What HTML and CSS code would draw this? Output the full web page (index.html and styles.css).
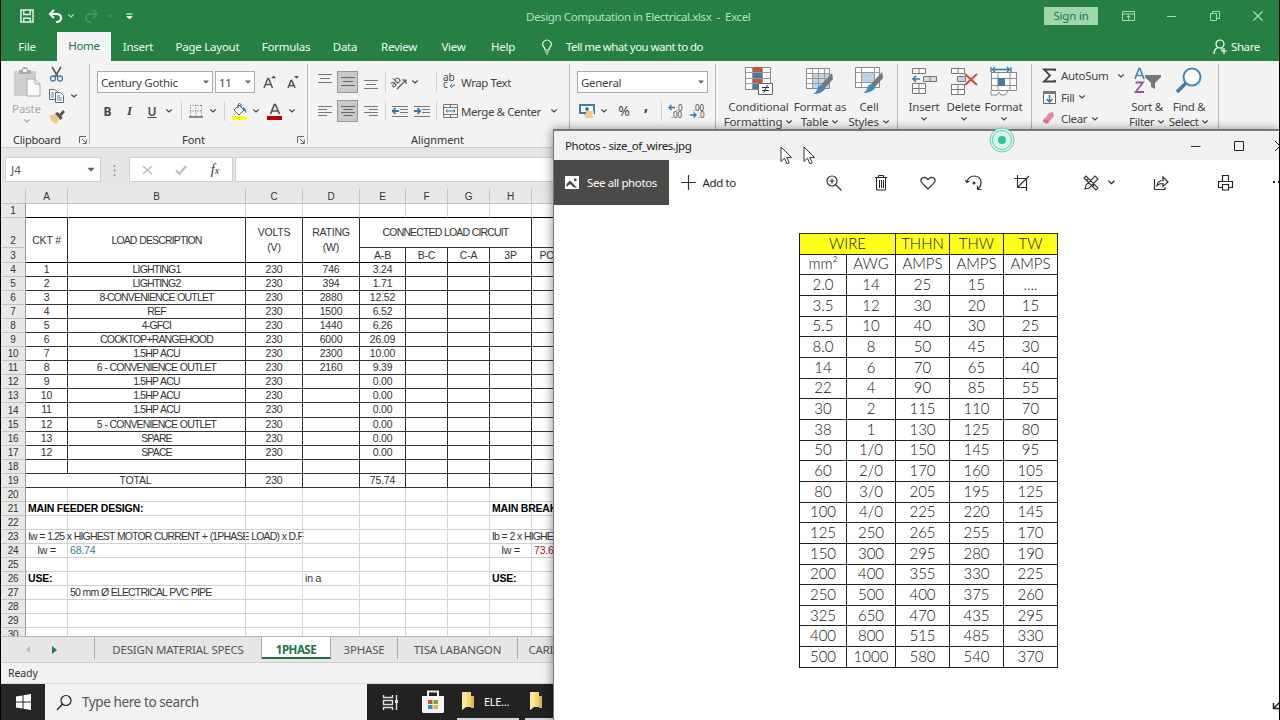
FILE: index.html
```html
<!DOCTYPE html>
<html lang="en">
<head>
<meta charset="utf-8">
<title>Design Computation in Electrical.xlsx - Excel</title>
<link rel="stylesheet" href="styles.css">
</head>
<body>
<svg class="defs" width="0" height="0">
  <symbol id="chev" viewBox="0 0 8 6"><path d="M1.300 1.500 4 4 6.700 1.500" fill="none" stroke="currentColor" stroke-width="1.1"/></symbol>
  <symbol id="tri" viewBox="0 0 6 4"><path d="M0 .5h6L3 3.8z" fill="#666"/></symbol>
  <symbol id="launch" viewBox="0 0 8 8"><path d="M.5 7V.5H7M3 3l4 4M7.3 3.500v4H3.500" fill="none" stroke="#666"/></symbol>
  <symbol id="folder" viewBox="0 0 14 20"><path d="M1 1h9v4h2v11H5l-4 3z" fill="#f3d675"/><path d="M1 1h5v14l-5 4z" fill="#fbe9a2"/><path d="M10 5h3v12h-3z" fill="#dcb650"/></symbol>
  <symbol id="pointer" viewBox="0 0 13 19"><path d="M1 1v14.500l3.500-3.300 2.400 5.600 2.300-1-2.400-5.400h4.700z" fill="#fff" stroke="#333"/></symbol>
  <symbol id="brush" viewBox="0 0 20 22"><path d="M19 0 20 6 12 15 8 12z" fill="#777"/><path d="M8 12q4 0 4 4-3 5-12 5 4-2 4-5 1-3 4-4z" fill="#4389b8"/></symbol>
</svg>
<div class="screen">
  <div class="excel">
    <header class="titlebar">
      <div class="qat">
        <svg width="14" height="14" viewBox="0 0 15 15"><path d="M1 1h13v13H1zM4 1v5h7V1M4 14v-4h7v4" fill="none" stroke="#e4f5e8" stroke-width="1.6"/></svg>
        <svg width="15" height="14" viewBox="0 0 15 14"><path d="M6 1 2 5l4 4M2 5h6q5 0 5 4t-5 4" fill="none" stroke="#fff" stroke-width="2"/></svg>
        <svg class="c light" width="8" height="6"><use href="#chev"/></svg>
        <svg width="15" height="14" viewBox="0 0 15 14"><path d="M9 1l4 4-4 4M13 5H7Q2 5 2 9t5 4" fill="none" stroke="#44935c" stroke-width="2"/></svg>
        <svg class="c dim" width="8" height="6"><use href="#chev"/></svg>
        <svg class="c light" width="7" height="7" viewBox="0 0 7 7"><path d="M.5 1h6M1 3.500h5L3.500 6z" stroke="#fff" fill="#fff"/></svg>
      </div>
      <div class="doc">Design Computation in Electrical.xlsx&nbsp; -&nbsp; Excel</div>
      <div class="signin">Sign in</div>
      <div class="winbtns">
        <svg width="13" height="11" viewBox="0 0 13 11"><path d="M.5.5h12v9H.5zM.5 3h12M6.500 9V4.500M4.500 6.500l2-2 2 2" fill="none" stroke="#a6dcb4"/></svg>
        <svg width="10" height="10"><path d="M0 5.500h9" stroke="#a6dcb4"/></svg>
        <svg width="10" height="10"><path d="M.5 2.500h6v7h-6zM2.500 2.500v-2h7v7h-3" fill="none" stroke="#a6dcb4"/></svg>
        <svg width="10" height="10"><path d="M.5.5l9 9M9.500.5l-9 9" stroke="#a6dcb4" stroke-width="1.200"/></svg>
      </div>
    </header>
    <nav class="tabs">
      <span class="file">File</span><span class="home">Home</span><span>Insert</span><span>Page Layout</span><span>Formulas</span><span>Data</span><span>Review</span><span>View</span><span>Help</span>
      <svg width="12" height="16" viewBox="0 0 12 16"><path d="M4 11Q4 9 2.500 7.500 1 5.500 2 3.500 3.500 1 6 1t4 2.500q1 2-.5 4Q8 9 8 11zM4 13h4M5 15h2" fill="none" stroke="#e8f6eb" stroke-width="1.200"/></svg>
      <span class="tell">Tell me what you want to do</span>
      <svg class="share-ico" width="15" height="16" viewBox="0 0 15 16"><circle cx="7" cy="5" r="4" fill="none" stroke="#fff" stroke-width="1.200"/><path d="M1 15q0-5 4-6.500M8 9.500l2 1M11 9v6M8 12h6" fill="none" stroke="#fff" stroke-width="1.200"/></svg>
      <span class="share">Share</span>
    </nav>

    <section class="ribbon">
      <div class="group clipboard">
        <div class="clip-body">
          <div class="big paste">
            <svg width="28" height="31" viewBox="0 0 28 31"><path d="M1 4h22v25H1z" fill="#cfcfcf"/><path d="M6 3h3q0-3 3-3t3 3h3v4H6z" fill="#aaa"/><path d="M10 2h4v3h-4z" fill="#eee"/><path d="M14 12h8l5 5v12H14z" fill="#fafafa" stroke="#aaa"/><path d="M22 12v5h5" fill="none" stroke="#aaa"/></svg>
            <span>Paste</span><svg width="8" height="6"><use href="#chev"/></svg>
          </div>
          <div class="clip-col">
            <svg width="15" height="15" viewBox="0 0 15 15"><path d="M3 0l6 10M12 0 6 10" stroke="#555" stroke-width="1.600"/><circle cx="4" cy="11.500" r="2.500" fill="none" stroke="#3f7fae" stroke-width="1.300"/><circle cx="11" cy="11.500" r="2.500" fill="none" stroke="#3f7fae" stroke-width="1.300"/></svg>
            <div class="with-chev"><svg width="15" height="14" viewBox="0 0 15 14"><path d="M.5.5h5l3 2v8h-8z" fill="#fff" stroke="#666"/><path d="M6.500 3.500h5l3 3v7h-8z" fill="#fff" stroke="#666"/><path d="M2 4h3M2 6h3M2 8h3M8 7h3M8 9h5M8 11h5" stroke="#4389b8"/></svg><svg width="8" height="6"><use href="#chev"/></svg></div>
            <svg width="16" height="14" viewBox="0 0 16 14"><path d="M0 6l6-2 5 5-4 5-2-1-1-2-1 1z" fill="#efc98a"/><path d="M6 3.500 8.500 2l2 2L14 0l2 2-3.500 4 1 2-2 2z" fill="#555"/></svg>
          </div>
        </div>
        <div class="label"><span>Clipboard</span><svg width="8" height="8"><use href="#launch"/></svg></div>
      </div>
      <div class="group font">
        <div class="row r1">
          <div class="combo face"><span>Century Gothic</span><svg width="6" height="4"><use href="#tri"/></svg></div>
          <div class="combo size"><span>11</span><svg width="6" height="4"><use href="#tri"/></svg></div>
          <svg class="grow" width="14" height="14" viewBox="0 0 14 14"><path d="M1 13 4.800 3.500h.8L9.500 13M2.500 9.500h5.500" fill="none" stroke="#555" stroke-width="1.500"/><path d="M8 3.200h5L10.500.5z" fill="#555"/></svg>
          <svg class="shrink" width="13" height="14" viewBox="0 0 13 14"><path d="M1 13 4 5.500h.8L8 13M2 10.500h5" fill="none" stroke="#555" stroke-width="1.500"/><path d="M7 1h5L9.500 3.700z" fill="#555"/></svg>
        </div>
        <div class="row r2">
          <b>B</b><b class="it">I</b><b class="un">U</b><svg width="8" height="6"><use href="#chev"/></svg><i class="sep"></i>
          <svg width="14" height="14"><path d="M1 1.500h12M1 7h12M1.500 1v11M7 1v11M12.500 1v11" stroke="#777" stroke-dasharray="1 1.500"/><path d="M0 13h14" stroke="#555" stroke-width="1.300"/></svg>
          <svg width="8" height="6"><use href="#chev"/></svg><i class="sep"></i>
          <svg width="16" height="17" viewBox="0 0 16 17"><path d="M2 7l5-5 5 5-5 5z" fill="#fff" stroke="#555"/><path d="M6 5V1.500q1.500-2 3 0V4" fill="none" stroke="#555"/><path d="M11 4q4 2 3 6-2-3-4-4z" fill="#3f7fae"/><path d="M0 13h15v4H0z" fill="#fbfb26"/></svg>
          <svg width="8" height="6"><use href="#chev"/></svg>
          <svg width="16" height="17" viewBox="0 0 16 17"><path d="M3.500 11 7.300 1.500h1L12.500 11M5 8h6" fill="none" stroke="#555" stroke-width="1.700"/><path d="M0 13h15v4H0z" fill="#c00000"/></svg>
          <svg width="8" height="6"><use href="#chev"/></svg>
        </div>
        <div class="label"><span>Font</span><svg width="8" height="8"><use href="#launch"/></svg></div>
      </div>
      <div class="group align">
        <div class="row a1">
          <svg width="14" height="16"><path d="M0 .5h14M2 4.500h10M0 8.500h14" stroke="#777"/></svg>
          <i class="on"><svg width="14" height="12"><path d="M0 1.500h14M2 5.500h10M0 9.500h14" stroke="#666"/></svg></i>
          <svg width="14" height="16"><path d="M0 6.500h14M2 10.500h10M0 14.500h14" stroke="#777"/></svg>
          <i class="sep"></i>
          <svg width="16" height="15" viewBox="0 0 16 15"><g transform="rotate(-45 5 7)"><text x="-2" y="9" font-family="Noto Sans" font-size="10" fill="#444">ab</text></g><path d="M5 14 14 5M14 9V5h-4" fill="none" stroke="#555" stroke-width="1.200"/></svg>
          <svg class="l" width="8" height="6"><use href="#chev"/></svg>
          <i class="sep"></i>
          <svg width="14" height="16" viewBox="0 0 14 16"><text x="0" y="7" font-family="Noto Sans" font-size="10" fill="#444">ab</text><text x="0" y="14" font-family="Noto Sans" font-size="10" fill="#444">c</text><path d="M7 12h4v-2M9 10l-2 2 2 2" fill="none" stroke="#3f7fae"/></svg>
          <span>Wrap Text</span>
        </div>
        <div class="row a1">
          <svg width="14" height="12"><path d="M0 1.500h14M0 4.500h9M0 7.500h14M0 10.500h9" stroke="#777"/></svg>
          <i class="on"><svg width="14" height="12"><path d="M0 1.500h14M2.500 4.500h9M0 7.500h14M2.500 10.500h9" stroke="#666"/></svg></i>
          <svg width="14" height="12"><path d="M0 1.500h14M5 4.500h9M0 7.500h14M5 10.500h9" stroke="#777"/></svg>
          <i class="sep"></i>
          <svg width="16" height="13"><path d="M0 1.500h16M8 4.500h8M8 7.500h8M0 11.500h16" stroke="#777"/><path d="M0 6h7M3.500 3 .8 6l2.700 3" fill="none" stroke="#2f79ad" stroke-width="1.800"/></svg>
          <svg width="16" height="13"><path d="M0 1.500h16M8 4.500h8M8 7.500h8M0 11.500h16" stroke="#777"/><path d="M0 6h6M3.500 3 6.200 6 3.500 9" fill="none" stroke="#2f79ad" stroke-width="1.800"/></svg>
          <i class="sep"></i>
          <svg width="15" height="14"><path d="M.5.5h14v13H.5zM.5 3.500h14M.5 10.500h14M7.500.5v3M7.500 10.500v3" fill="none" stroke="#777"/><path d="M3 7h9M4.500 5.500 3 7l1.500 1.500M10.500 5.500 12 7l-1.500 1.500" fill="none" stroke="#2f79ad"/></svg>
          <span>Merge &amp; Center</span><svg width="8" height="6"><use href="#chev"/></svg>
        </div>
        <div class="label"><span>Alignment</span></div>
      </div>
      <div class="group number">
        <div class="row"><div class="combo gen"><span>General</span><svg width="6" height="4"><use href="#tri"/></svg></div></div>
        <div class="row n2">
          <svg width="16" height="15"><path d="M1 1h14v8H1z" fill="#fff" stroke="#3f7f9e" stroke-width="2"/><circle cx="8" cy="5" r="2" fill="#3f7f9e"/><path d="M7 7h8v3H7zM5 10h8v2H5zM6 12h8v2H6z" fill="#f2cf85"/></svg>
          <svg width="8" height="6"><use href="#chev"/></svg>
          <span class="pct">%</span><span class="comma">,</span><i class="sep"></i>
          <svg width="15" height="15" viewBox="0 0 15 15"><text x="8" y="6.500" font-family="Noto Sans" font-size="8" fill="#444">.0</text><text x="3" y="14" font-family="Noto Sans" font-size="8" fill="#444">.00</text><path d="M1 3.500h6M3.500 1 1 3.500 3.500 6" fill="none" stroke="#2f79ad" stroke-width="1.300"/></svg>
          <svg width="15" height="15" viewBox="0 0 15 15"><text x="3" y="6.500" font-family="Noto Sans" font-size="8" fill="#444">.00</text><text x="8" y="14" font-family="Noto Sans" font-size="8" fill="#444">.0</text><path d="M0 11h6M3.500 8.500 6 11 3.500 13.500" fill="none" stroke="#2f79ad" stroke-width="1.300"/></svg>
        </div>
      </div>
      <div class="group styles">
        <div class="big"><svg width="28" height="30"><path d="M.5 1.500h25v22H.5z" fill="#fff" stroke="#888"/><path d="M8 1h9v5H8zM8 12h9v5H8z" fill="#c5573d"/><path d="M8 7h10v5H8z" fill="#447ba6"/><path d="M8 18h5v5H8z" fill="#447ba6"/><path d="M.5 6.500h25M.5 12.500h25M.5 17.500h25M7.500 1v22M17.500 1v22" stroke="#999"/><path d="M13.500 17.500h14v11h-14z" fill="#fff" stroke="#666"/><path d="M17 21.500h7M17 24.500h7M22.500 19l-4 8" stroke="#333"/></svg><span>Conditional<br>Formatting <svg width="8" height="6"><use href="#chev"/></svg></span></div>
        <div class="big"><svg width="28" height="30"><path d="M.5 2.500h23v20H.5z" fill="#fff" stroke="#888"/><path d="M6 8h17v14H6z" fill="#b9d3ea"/><path d="M.5 7.500h23M.5 12.500h23M.5 17.500h23M6.500 2v20M12.500 2v20M18.500 2v20" stroke="#999"/><use href="#brush" x="7" y="7" width="20" height="22"/></svg><span>Format as<br>Table <svg width="8" height="6"><use href="#chev"/></svg></span></div>
        <div class="big"><svg width="28" height="30"><path d="M.5 1.500h24v20H.5z" fill="#fff" stroke="#888"/><path d="M6 6h13v11H6z" fill="#b9d3ea"/><path d="M.5 6.500h24M.5 16.500h24M6.500 1v20M19.500 1v20" stroke="#999"/><use href="#brush" x="8" y="6" width="20" height="22"/></svg><span>Cell<br>Styles <svg width="8" height="6"><use href="#chev"/></svg></span></div>
      </div>
      <div class="group cells">
        <div class="big"><svg width="26" height="30"><path d="M1.500 2.500h13v5h-13zM8 2v5M1.500 17.500h13v10h-13zM8 17v10M1.500 22.500h13" fill="#fff" stroke="#777"/><path d="M12.500 10.500h13v5h-13z" fill="#d6dfe6" stroke="#777"/><path d="M19 10v5" stroke="#777"/><path d="M2 13h7M5 10l-3 3 3 3" fill="none" stroke="#2f79ad" stroke-width="1.500"/></svg><span>Insert</span><svg width="8" height="6"><use href="#chev"/></svg></div>
        <div class="big"><svg width="28" height="30"><path d="M1.500 2.500h13v5h-13zM8 2v5M1.500 18.500h13v10h-13zM8 18v10M1.500 23.500h13" fill="#fff" stroke="#777"/><path d="M7.500 10.500h8v5h-8z" fill="#b9d3ea" stroke="#777"/><path d="M15 8l12 11M27 8 15 19" stroke="#cf4b35" stroke-width="2"/></svg><span>Delete</span><svg width="8" height="6"><use href="#chev"/></svg></div>
        <div class="big"><svg width="28" height="30"><path d="M1.500 6.500h25v18h-25zM8 6v18M20 6v18M1.500 12.500h25M1.500 19.500h25" fill="#fff" stroke="#888"/><path d="M8 12h7v8H8z" fill="#447ba6"/><path d="M1 1v5M21 1v5M3 3.500h16M5 1 2.500 3.500 5 6M17 1l2.500 2.500L17 6" fill="none" stroke="#2f79ad" stroke-width="1.300"/><path d="M1 25v4h6l2-3 2 3h4l3-4" fill="#fff" stroke="#888"/></svg><span>Format</span><svg width="8" height="6"><use href="#chev"/></svg></div>
      </div>
      <div class="group editing">
        <div class="edit-col">
          <div><svg width="15" height="15"><path d="M13 3V1.500H2L8 7.500 2 13.500h11V12" fill="none" stroke="#444" stroke-width="1.800"/></svg><span class="auto">AutoSum</span><svg width="8" height="6"><use href="#chev"/></svg></div>
          <div><svg width="15" height="15"><path d="M1.500 1.500h12v12h-12z" fill="#fff" stroke="#666"/><path d="M1 1h13v3H1z" fill="#777"/><path d="M7.500 5v7M4.500 9l3 3 3-3" fill="none" stroke="#2f79ad" stroke-width="1.500"/></svg><span>Fill</span><svg width="8" height="6"><use href="#chev"/></svg></div>
          <div><svg width="15" height="13"><path d="M7 1l4-1 1 4-6 7-5-2z" fill="#e58a9c"/><path d="M2 6l5 4-2 2-4-2z" fill="#d96f9a"/></svg><span>Clear</span><svg width="8" height="6"><use href="#chev"/></svg></div>
        </div>
        <div class="big"><svg width="30" height="30"><path d="M3 13 7 2.500h1L12 13M4.500 9.500h6" fill="none" stroke="#4389b8" stroke-width="1.700"/><path d="M3.500 16.500H11l-7.500 9.500H12" fill="none" stroke="#9455a8" stroke-width="1.800"/><path d="M13 9h16v2l-6 6v6l-4-2v-4l-6-6z" fill="#777"/></svg><span>Sort &amp;<br>Filter <svg width="8" height="6"><use href="#chev"/></svg></span></div>
        <div class="big"><svg width="28" height="30"><circle cx="17" cy="11" r="8.500" fill="#fff" stroke="#4389b8" stroke-width="2"/><path d="M11 17 2 26" stroke="#447ba6" stroke-width="3.500"/></svg><span>Find &amp;<br>Select <svg width="8" height="6"><use href="#chev"/></svg></span></div>
      </div>
    </section>

    <div class="formula">
      <div class="namebox"><span>J4</span><svg width="8" height="5" viewBox="0 0 6 4"><use href="#tri"/></svg></div>
      <svg class="dots" width="3" height="12"><path d="M1.500 1v11" stroke="#999" stroke-width="1.500" stroke-dasharray="2 2.500"/></svg>
      <div class="fxbox">
        <svg width="11" height="10"><path d="M1 1l9 8M10 1 1 9" stroke="#bbb" stroke-width="1.500"/></svg>
        <svg width="12" height="10"><path d="M1 5.500 4.500 9 11 1" fill="none" stroke="#bbb" stroke-width="2"/></svg>
        <span>f<small>x</small></span>
      </div>
      <div class="input"></div>
    </div>

    <div class="sheet" id="sheet"></div>

    <div class="sheettabs">
      <span class="nav"><svg width="5" height="8"><path d="M5 0v7L1 3.500z" fill="#bbb"/></svg><svg width="5" height="8"><path d="M0 0v8l5-4z" fill="#1f7a45"/></svg></span>
      <span class="t1">DESIGN MATERIAL SPECS</span><span class="active">1PHASE</span><span class="t2">3PHASE</span><span class="t3">TISA LABANGON</span><span class="t4">CARIDAD</span>
    </div>
    <div class="status">Ready</div>
  </div>

  <footer class="taskbar">
    <div class="start"><svg width="15" height="16"><path d="M0 2.500 6.500 1.500V7.500H0zM7.500 1.300 15 0v7.500H7.500zM0 8.500h6.500v6L0 13.500zM7.500 8.500H15V16l-7.500-1.200z" fill="#fff"/></svg></div>
    <div class="search"><svg width="17" height="17"><circle cx="10" cy="6.500" r="5" fill="none" stroke="#222" stroke-width="1.200"/><path d="M6.500 10 1 16" stroke="#222" stroke-width="1.300"/></svg><span>Type here to search</span></div>
    <div class="pins">
      <svg width="17" height="15"><path d="M1.500 0v2.500h9V0M1.500 5.500h9v4h-9zM1.500 15v-2.500h9V15M14.500 0v15" fill="none" stroke="#ddd" stroke-width="1.400"/><path d="M13 5h3v3h-3z" fill="#ddd"/></svg>
      <svg width="22" height="24"><path d="M6 7V1.500h10V7" fill="none" stroke="#eee" stroke-width="2"/><path d="M0 6h22v16l-1 1H1l-1-1z" fill="#f3f3f3"/><path d="M6 10h4.500v4H6z" fill="#d9502e"/><path d="M11.500 10H16v4h-4.500z" fill="#7fa632"/><path d="M6 15h4.500v4H6z" fill="#2f8fc8"/><path d="M11.500 15H16v4h-4.500z" fill="#e9b528"/></svg>
      <div class="app"><svg width="14" height="20"><use href="#folder"/></svg><span>ELE...</span></div>
      <div class="app second"><svg width="14" height="20"><use href="#folder"/></svg></div>
    </div>
  </footer>

  <section class="photos">
    <div class="ph-title"><span>Photos - size_of_wires.jpg</span>
      <div class="ph-win"><svg width="10" height="10"><path d="M0 5.500h9.500" stroke="#333"/></svg><svg width="10" height="10"><path d="M.5.5h9v9h-9z" fill="none" stroke="#222"/></svg><svg width="10" height="10"><path d="M0 0l10 10M10 0 0 10" stroke="#222"/></svg></div>
    </div>
    <div class="ph-bar">
      <div class="all"><svg width="14" height="13"><path d="M0 0h14v13H0z" fill="#fff"/><path d="M1.500 8 5 4.500 12 11.500H9L5 8l-3.500 3z" fill="#4c4a48"/><path d="M9 2.500h2.500V5H9z" fill="#4c4a48"/></svg><span>See all photos</span></div>
      <div class="add"><svg width="15" height="15"><path d="M0 7.500h15M7.500 0v15" stroke="#333" stroke-width="1.200"/></svg><span>Add to</span></div>
      <div class="acts">
        <svg width="16" height="16"><circle cx="6" cy="6" r="5" fill="none" stroke="#333" stroke-width="1.200"/><path d="M9.500 9.500l6 6M3.500 6h5M6 3.500v5" stroke="#333" stroke-width="1.200"/></svg>
        <svg width="14" height="16"><path d="M1 2.500h12M4.500 2.500v-2h5v2M2.500 2.500v12.500h9V2.500M5.500 5v8M7.500 5v8M9.500 5v8" fill="none" stroke="#222"/></svg>
        <svg width="16" height="14"><path d="M8 13 1.500 6.500Q0 4 2 2q3-2 6 1.500Q11 0 14 2q2 2 .5 4.500z" fill="none" stroke="#333" stroke-width="1.200"/></svg>
        <svg width="17" height="16"><path d="M.8 7Q2.500 1 8.500 1 15 1.500 15 7.500q0 4-3 6.500M-.5 5 .8 7.500 3.500 6M15.500 14.500H11.500v-4" fill="none" stroke="#333" stroke-width="1.200"/><circle cx="8" cy="8" r="1.500" fill="#333"/></svg>
        <svg width="16" height="16"><path d="M3.500 0v12.500H13M0 3.500h12.500V16M15 1 4 12" fill="none" stroke="#333" stroke-width="1.200"/></svg>
        <i></i>
        <svg width="16" height="16"><path d="M2 14l1-4L12 1l3 3-9 9zM1 3l2-2 12 12-2 2zM4 5l1.500-1.500M10 11l1.500-1.500" fill="none" stroke="#333" stroke-width="1.100"/></svg>
        <svg width="9" height="7" viewBox="0 0 8 6"><use href="#chev"/></svg>
        <i></i>
        <svg width="16" height="14"><path d="M1.500 3v10.500H12V11M4 9.500q1-5 6-5V1l5 5-5 4.500V7.500q-4 0-6 2z" fill="none" stroke="#333" stroke-width="1.200"/></svg>
        <i></i>
        <svg width="16" height="16"><path d="M4.500 6V.5h6V6M4 12.500H.5v-6h14v6H11M4.500 9.500h6v5.500h-6z" fill="none" stroke="#222" stroke-width="1.200"/></svg>
        <svg class="more" width="13" height="3"><path d="M0 0h2v2H0zM5 0h2v2H5zM10 0h2v2h-2z" fill="#222"/></svg>
      </div>
    </div>
    <div class="canvas"><div class="wires" id="wires"></div></div>
  </section>

  <svg class="float p1" width="13" height="19"><use href="#pointer"/></svg>
  <svg class="float p2" width="13" height="19"><use href="#pointer"/></svg>
  <svg class="float halo" width="28" height="28"><circle cx="14" cy="14" r="12" fill="#d9f3eb" stroke="#5fcfb2"/><circle cx="14" cy="14" r="9.500" fill="none" stroke="#5fcfb2"/><circle cx="14" cy="14" r="4" fill="#2cc79b"/></svg>
  <svg class="float grip" width="7" height="9"><path d="M1.500 2v5.500H7M1.500 7.500 8 1" fill="none" stroke="#222" stroke-width="1.500"/></svg>
</div>
<script src="sheet.js"></script>
</body>
</html>
```

FILE: styles.css
```css
* { box-sizing: border-box; }
body { margin: 0; background: #000; font-family: "Noto Sans", "Open Sans", sans-serif; font-size: 11.5px; color: #333; }
svg { display: block; flex: none; overflow: visible; }
.defs { position: absolute; }
.screen { position: relative; width: 1280px; height: 720px; overflow: hidden; padding: 0 1px; background: #000; white-space: nowrap; }
.excel { height: 684px; background: #f2f2f2; overflow: hidden; }

.titlebar { height: 32px; background: #268044; display: grid; grid-template-columns: 135px 1fr 54px 181px; align-items: center; letter-spacing: -0.38px; }
.qat { display: grid; grid-template-columns: 28px 19px 17px 22px 20px 14px; padding-left: 19px; align-items: center; }
.light { color: #b9e2c4; }
.dim { color: #44935c; }
.doc { padding-left: 390px; color: #b4e0c1; }
.signin { height: 18px; line-height: 17px; text-align: center; background: #9fd6ae; color: #237a43; letter-spacing: -0.2px; }
.winbtns { display: grid; grid-template-columns: 45px 43px 43px 1fr; padding-left: 24px; align-items: center; }

.tabs { height: 29px; background: #268044; color: #f2faf4; display: flex; align-items: center; letter-spacing: -0.25px; }
.tabs span { line-height: 28px; text-align: center; width: 54px; }
.tabs .file { width: 56px; padding-right: 4px; }
.tabs .home { background: #f3f3f3; color: #217346; height: 29px; }
.tabs span:nth-of-type(4) { width: 85px; }
.tabs span:nth-of-type(5) { width: 72px; }
.tabs span:nth-of-type(6) { width: 46px; }
.tabs span:nth-of-type(7) { width: 62px; }
.tabs span:nth-of-type(8) { width: 47px; }
.tabs span:nth-of-type(9) { width: 52px; margin-right: 12px; }
.tabs .tell { width: auto; margin-left: 13px; margin-right: auto; letter-spacing: -0.55px; }
.tabs .share { width: 51px; text-align: left; padding-left: 3px; letter-spacing: -0.4px; }

.ribbon { height: 87px; padding-top: 3px; background: #f3f3f3; border-bottom: 1px solid #cfcfcf; display: flex; letter-spacing: -0.15px; color: #444; }
.group { height: 80px; border-right: 1px solid #b5b5b5; display: flex; flex-direction: column; padding-top: 7px; }
.row { display: grid; align-items: center; height: 22px; }
.row + .row { margin-top: 7px; }
.row > * { justify-self: center; }
.sep { width: 1px; height: 20px; background: #d2d2d2; }
.label { margin-top: auto; height: 14px; line-height: 14px; display: flex; align-items: center; padding-right: 2px; margin-bottom: -3px; font-size: 11px; color: #333; }
.label span { flex: 1; text-align: center; letter-spacing: -0.05px; }
.clipboard { width: 89px; padding-top: 3px; }
.clipboard .label span { text-align: left; padding-left: 12px; letter-spacing: -0.25px; }
.clip-body { display: flex; }
.paste { width: 46px; padding-left: 5px; color: #a8a8a8; }
.clip-col { display: flex; flex-direction: column; gap: 7px; padding-left: 2px; }
.with-chev { display: flex; align-items: center; gap: 6px; }
.font { width: 218px; }
.font .row { margin-left: 7px; }
.r1 { grid-template-columns: 118px 39px 32px 14px; }
.r2 { grid-template-columns: 21px 23px 22px 12px 12px 18px 15px 8px 23px 10px 28px 6px; }
.r1 > .combo { justify-self: start; }
.r2 b { font-size: 12px; color: #444; }
.r2 .it { font-style: italic; font-family: "Liberation Serif", serif; font-size: 13px; }
.r2 .un { text-decoration: underline; font-weight: 600; }
.combo { height: 22px; background: #fff; border: 1px solid #ababab; display: flex; align-items: center; justify-content: space-between; padding: 0 3px; color: #444; letter-spacing: -0.3px; }
.face { width: 116px; }
.size { width: 40px; }
.gen { width: 131px; }
.align { width: 262px; }
.align .row { padding-left: 6px; grid-template-columns: 22px 23px 23px 6px 23px 22px 6px 22px 83px 20px; }
.align .row span { justify-self: start; letter-spacing: -0.42px; }
.align .l { justify-self: start; }
.on { width: 21px; height: 22px; border: 1px solid #999; background: #cacaca; display: flex; align-items: center; justify-content: center; }
.number { width: 146px; padding-left: 7px; }
.number .row > .combo { justify-self: start; }
.n2 { grid-template-columns: 20px 14px 26px 18px 12px 17px 27px; }
.pct { font-size: 14px; line-height: 20px; }
.comma { font-size: 16px; font-weight: 700; height: 22px; line-height: 11px; }
.big { display: flex; flex-direction: column; align-items: center; text-align: center; line-height: 15px; }
.big span svg { display: inline-block; vertical-align: 1px; }
.big > span + svg { margin-top: 2px; }
.big > svg:first-child { margin-bottom: 3px; }
.styles, .cells, .editing { display: grid; padding-top: 2px; align-items: start; }
.styles { width: 182px; padding-left: 8px; grid-template-columns: 69px 54px 44px; }
.cells { width: 134px; padding-left: 6px; grid-template-columns: 40px 39px 41px; }
.editing { width: 187px; padding-left: 10px; grid-template-columns: 85px 40px 44px; letter-spacing: -0.35px; }
.edit-col div { display: flex; align-items: center; gap: 4px; height: 21.5px; margin-top: -1px; margin-bottom: 1px; }
.edit-col .auto { margin-right: 5px; }

.formula { height: 41px; background: #e6e6e6; display: flex; align-items: center; padding-left: 4px; padding-top: 2px; }
.formula > div { height: 25px; background: #fff; border: 1px solid #cfcfcf; }
.namebox { width: 96px; display: flex; align-items: center; justify-content: space-between; padding: 0 5px; color: #555; }
.dots { margin: 0 13px 0 12px; }
.fxbox { width: 104px; display: grid; grid-template-columns: 34px 34px 34px; justify-items: center; align-items: center; margin-right: 2px; }
.fxbox span { font: italic 14px "Liberation Serif", serif; }
.fxbox small { font-size: 10px; }
.input { flex: 1; }

.sheet { height: 447px; width: 600px; overflow: hidden; display: grid; background: #fff; font-family: "Liberation Sans", sans-serif; font-size: 10.5px; letter-spacing: -0.2px; color: #333;
  grid-template-columns: 25px 42px 178px 57px 57px 46px 42px 42px 42px 69px;
  grid-template-rows: 15px 14px 30px 15px repeat(27, 14.06px); }
.cell { border-right: 1px solid #d6d6d6; border-bottom: 1px solid #d0d0d0; display: flex; align-items: center; justify-content: center; text-align: center; min-width: 0; min-height: 0; padding-bottom: 1px; }
.head { background: #e8e8e8; border-color: #c4c4c4; color: #333; font-size: 10px; padding-bottom: 0; }
.head.rowno { border-right-color: #999; align-items: flex-end; line-height: 11px; padding-bottom: 1px; }
.tbl { border-color: #333; }
.strong { border-bottom-color: #000; }
.lines { line-height: 14.5px; }
.left { justify-content: flex-start; padding-left: 2px; }
.bold { font-weight: 700; color: #000; }
.blue { color: #2f7f93; }
.red { color: #a3202c; }
.caps { letter-spacing: -0.85px; word-spacing: 0.5px; }

.sheettabs { height: 27px; background: #e6e6e6; border-top: 1px solid #b8b8b8; border-bottom: 1px solid #cfcfcf; display: flex; color: #555; line-height: 25px; letter-spacing: -0.2px; }
.sheettabs span { border-right: 1px solid #aaa; height: 22px; text-align: center; }
.sheettabs .nav { width: 94px; display: flex; gap: 22px; padding: 9px 0 0 24px; }
.sheettabs .t1 { width: 167px; }
.sheettabs .active { width: 69px; background: #fff; color: #217346; font-weight: 700; border-bottom: 2px solid #217346; letter-spacing: -0.5px; }
.sheettabs .t2 { width: 67px; }
.sheettabs .t3 { width: 120px; }
.sheettabs .t4 { width: 70px; }
.status { height: 21px; line-height: 20px; padding-left: 7px; background: #f2f2f2; font-size: 10.5px; letter-spacing: -0.1px; border-bottom: 1px solid #d8d8d8; }

.taskbar { height: 36px; background: #222; display: flex; }
.start { width: 44px; display: flex; align-items: center; justify-content: center; background: #262626; }
.search { width: 322px; background: #f2f2f2; display: flex; align-items: center; gap: 9px; padding-left: 11px; font-size: 13.5px; color: #555; letter-spacing: -0.4px; }
.pins { display: flex; align-items: center; padding-left: 15px; }
.pins > svg + svg { margin-left: 23px; }
.app { height: 36px; margin-left: 13px; width: 62px; border-bottom: 2px solid #cfd8df; display: flex; align-items: center; gap: 9px; padding-left: 4px; color: #fff; font-size: 11px; letter-spacing: -0.3px; }
.app.second { margin-left: 6px; }

.photos { position: absolute; left: 553px; top: 129px; width: 726px; height: 591px; overflow: visible; background: #fff; border-left: 1px solid #777; border-top: 2px solid #777; box-shadow: -1px 0 9px rgba(0,0,0,.4); clip-path: inset(-12px 0 0 -14px); }
.ph-title { height: 29px; background: #f1f1f1; display: flex; align-items: center; justify-content: space-between; padding-left: 11px; letter-spacing: -0.43px; color: #222; }
.ph-win { display: grid; grid-template-columns: 43px 41px 4px; }
.ph-bar { height: 45px; display: flex; align-items: center; color: #222; letter-spacing: -0.4px; }
.all { width: 115px; height: 45px; background: #4c4a48; color: #fff; display: flex; align-items: center; gap: 8px; padding-left: 11px; }
.add { width: 142px; display: flex; align-items: center; gap: 7px; padding-left: 12px; }
.acts { flex: 1; display: grid; grid-template-columns: 47px 47px 47px 47px 47px 34px 24px 16px 19px 46px 18px 47px 30px; align-items: center; justify-items: center; }
.acts .more { justify-self: end; margin-right: -7px; }
.canvas { padding: 28px 0 0 245px; }
.wires { width: 259px; display: grid; grid-template-columns: 47px 49px 54px 54px 54px; grid-auto-rows: 20.67px; border-left: 1px solid #111; border-top: 1px solid #333; font: 300 15px "Lato", "Open Sans", sans-serif; color: #111; }
.wires div { border-right: 1px solid #222; border-bottom: 1px solid #222; display: flex; align-items: center; justify-content: center; min-height: 0; padding-bottom: 2px; }
.wires .y { background: #ffff1a; }
.wires .wide { grid-column: span 2; }

.float { position: absolute; }
.p1 { left: 780px; top: 146px; }
.p2 { left: 803px; top: 146px; }
.halo { left: 988px; top: 126px; }
.grip { left: 1272px; top: 701px; }
```

FILE: sheet.js
```js
const sheet = document.getElementById('sheet');

// Adds one cell; column 1 holds the row numbers, row 1 the column letters.
function put(text, col, row, cls = '', cols = 1, rows = 1) {
  const d = document.createElement('div');
  d.className = 'cell ' + cls;
  d.style.gridColumn = col + ' / span ' + cols;
  d.style.gridRow = row + ' / span ' + rows;
  d.innerHTML = text;
  sheet.append(d);
}

['', 'A', 'B', 'C', 'D', 'E', 'F', 'G', 'H', 'I'].forEach((t, i) => put(t, i + 1, 1, 'head'));
for (let r = 1; r <= 30; r++) put(r, 1, r + 1, 'head rowno');

for (let c = 2; c <= 10; c++) put('', c, 2, 'strong');
put('CKT #', 2, 3, 'tbl strong', 1, 2);
put('LOAD DESCRIPTION', 3, 3, 'tbl strong caps', 1, 2);
put('VOLTS<br>(V)', 4, 3, 'tbl strong lines', 1, 2);
put('RATING<br>(W)', 5, 3, 'tbl strong lines', 1, 2);
put('CONNECTED LOAD CIRCUIT', 6, 3, 'tbl caps', 4);
put('', 10, 3, 'tbl');
['A-B', 'B-C', 'C-A', '3P'].forEach((t, i) => put(t, 6 + i, 4, 'tbl strong'));
put('&nbsp; POLES', 10, 4, 'tbl strong left');

const loads = [
  [1, 'LIGHTING1', 230, 746, '3.24'],
  [2, 'LIGHTING2', 230, 394, '1.71'],
  [3, '8-CONVENIENCE OUTLET', 230, 2880, '12.52'],
  [4, 'REF', 230, 1500, '6.52'],
  [5, '4-GFCI', 230, 1440, '6.26'],
  [6, 'COOKTOP+RANGEHOOD', 230, 6000, '26.09'],
  [7, '1.5HP ACU', 230, 2300, '10.00'],
  [8, '6 - CONVENIENCE OUTLET', 230, 2160, '9.39'],
  [9, '1.5HP ACU', 230, '', '0.00'],
  [10, '1.5HP ACU', 230, '', '0.00'],
  [11, '1.5HP ACU', 230, '', '0.00'],
  [12, '5 - CONVENIENCE OUTLET', 230, '', '0.00'],
  [13, 'SPARE', 230, '', '0.00'],
  [12, 'SPACE', 230, '', '0.00'],
  ['', '', '', '', '']
];
loads.forEach((load, i) => {
  for (let c = 0; c < 9; c++) put(load[c] ?? '', c + 2, i + 5, c === 1 ? 'tbl caps' : 'tbl');
});
put('TOTAL', 2, 20, 'tbl', 2);
[230, '', '75.74', '', '', '', ''].forEach((t, i) => put(t, 4 + i, 20, 'tbl'));

const notes = {
  '21-2': ['MAIN FEEDER DESIGN:', 'left bold'],
  '21-9': ['MAIN BREAKER:', 'left bold'],
  '23-2': ['Iw = 1.25 x HIGHEST MOTOR CURRENT + (1PHASE LOAD) x D.F', 'left caps'],
  '23-9': ['Ib = 2 x HIGHEST', 'left caps'],
  '24-2': ['Iw =', ''],
  '24-3': ['68.74', 'left blue'],
  '24-9': ['Iw =', ''],
  '24-10': ['73.66', 'left red'],
  '26-2': ['USE:', 'left bold'],
  '26-5': ['in a', 'left'],
  '26-9': ['USE:', 'left bold'],
  '27-3': ['50 mm Ø ELECTRICAL PVC PIPE', 'left caps']
};
for (let r = 20; r <= 30; r++) {
  for (let c = 2; c <= 10; c++) {
    const [text, cls] = notes[r + '-' + c] || ['', ''];
    put(text, c, r + 1, cls);
  }
}

const wires = document.getElementById('wires');
function wire(text, cls = '') {
  const d = document.createElement('div');
  d.className = cls;
  d.textContent = text;
  wires.append(d);
}
wire('WIRE', 'y wide');
['THHN', 'THW', 'TW'].forEach(t => wire(t, 'y'));
`mm² AWG AMPS AMPS AMPS
2.0 14 25 15 ....
3.5 12 30 20 15
5.5 10 40 30 25
8.0 8 50 45 30
14 6 70 65 40
22 4 90 85 55
30 2 115 110 70
38 1 130 125 80
50 1/0 150 145 95
60 2/0 170 160 105
80 3/0 205 195 125
100 4/0 225 220 145
125 250 265 255 170
150 300 295 280 190
200 400 355 330 225
250 500 400 375 260
325 650 470 435 295
400 800 515 485 330
500 1000 580 540 370`.split(/\s+/).forEach(t => wire(t));
```
